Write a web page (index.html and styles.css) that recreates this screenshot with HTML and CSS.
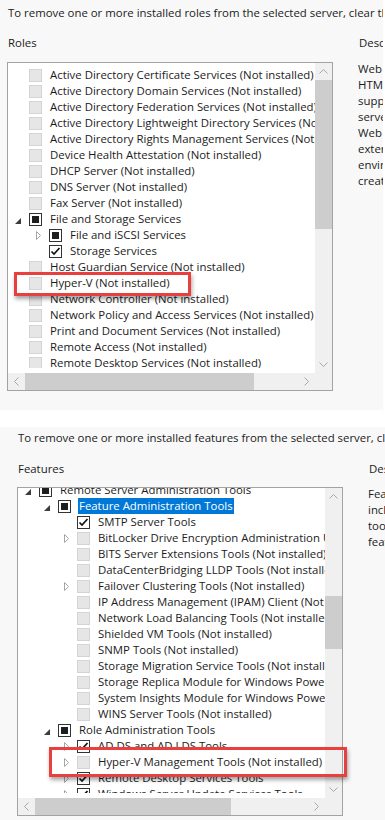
FILE: index.html
```html
<!DOCTYPE html>
<html>
<head>
<meta charset="utf-8">
<title>Remove Roles and Features</title>
<link rel="stylesheet" href="styles.css">
</head>
<body>
<section class="shot shot1">
  <p class="intro">To remove one or more installed roles from the selected server, clear the check boxes.</p>
  <div class="cols">
    <div class="left">
      <h2 class="label">Roles</h2>
      <div class="listbox">
        <div class="view">
          <ul class="tree t1">
            <li class="row l0"><span class="exp"></span><span class="cb dis"></span><span class="txt">Active Directory Certificate Services (Not installed)</span></li>
            <li class="row l0"><span class="exp"></span><span class="cb dis"></span><span class="txt">Active Directory Domain Services (Not installed)</span></li>
            <li class="row l0"><span class="exp"></span><span class="cb dis"></span><span class="txt">Active Directory Federation Services (Not installed)</span></li>
            <li class="row l0"><span class="exp"></span><span class="cb dis"></span><span class="txt">Active Directory Lightweight Directory Services (Not installed)</span></li>
            <li class="row l0"><span class="exp"></span><span class="cb dis"></span><span class="txt">Active Directory Rights Management Services (Not installed)</span></li>
            <li class="row l0"><span class="exp"></span><span class="cb dis"></span><span class="txt">Device Health Attestation (Not installed)</span></li>
            <li class="row l0"><span class="exp"></span><span class="cb dis"></span><span class="txt">DHCP Server (Not installed)</span></li>
            <li class="row l0"><span class="exp"></span><span class="cb dis"></span><span class="txt">DNS Server (Not installed)</span></li>
            <li class="row l0"><span class="exp"></span><span class="cb dis"></span><span class="txt">Fax Server (Not installed)</span></li>
            <li class="row l0"><span class="exp"><svg class="tri-open" width="6" height="6" viewBox="0 0 6 6"><polygon points="6,0 6,6 0,6"/></svg></span><span class="cb part"><i></i></span><span class="txt">File and Storage Services</span></li>
            <li class="row l1"><span class="exp"><svg class="tri-closed" width="5" height="9" viewBox="0 0 5 9"><polygon points="0.5,0.5 4.5,4.5 0.5,8.5"/></svg></span><span class="cb part"><i></i></span><span class="txt">File and iSCSI Services</span></li>
            <li class="row l1"><span class="exp"></span><span class="cb on"><svg width="11" height="11" viewBox="0 0 11 11"><polyline points="1.5,5.5 4,8 9.5,2"/></svg></span><span class="txt">Storage Services</span></li>
            <li class="row l0"><span class="exp"></span><span class="cb dis"></span><span class="txt">Host Guardian Service (Not installed)</span></li>
            <li class="row l0"><span class="exp"></span><span class="cb dis"></span><span class="txt">Hyper-V (Not installed)</span></li>
            <li class="row l0"><span class="exp"></span><span class="cb dis"></span><span class="txt">Network Controller (Not installed)</span></li>
            <li class="row l0"><span class="exp"></span><span class="cb dis"></span><span class="txt">Network Policy and Access Services (Not installed)</span></li>
            <li class="row l0"><span class="exp"></span><span class="cb dis"></span><span class="txt">Print and Document Services (Not installed)</span></li>
            <li class="row l0"><span class="exp"></span><span class="cb dis"></span><span class="txt">Remote Access (Not installed)</span></li>
            <li class="row l0"><span class="exp"></span><span class="cb dis"></span><span class="txt">Remote Desktop Services (Not installed)</span></li>
            <li class="row l0"><span class="exp"></span><span class="cb dis"></span><span class="txt">Volume Activation Services (Not installed)</span></li>
          </ul>
        </div>
        <div class="vbar">
          <span class="btn"><svg width="9" height="5" viewBox="0 0 9 5"><polyline points="0.5,4.5 4.5,0.5 8.5,4.5"/></svg></span>
          <span class="track"><span class="thumb th1"></span></span>
          <span class="btn"><svg width="9" height="5" viewBox="0 0 9 5"><polyline points="0.5,0.5 4.5,4.5 8.5,0.5"/></svg></span>
        </div>
        <div class="hbar">
          <span class="btn"><svg width="5" height="9" viewBox="0 0 5 9"><polyline points="4.5,0.5 0.5,4.5 4.5,8.5"/></svg></span>
          <span class="track"><span class="thumb tw1"></span></span>
          <span class="btn"><svg width="5" height="9" viewBox="0 0 5 9"><polyline points="0.5,0.5 4.5,4.5 0.5,8.5"/></svg></span>
        </div>
        <div class="corner"></div>
      </div>
    </div>
    <div class="desc">
      <h2 class="label">Description</h2>
      <div class="dtext">
        <div>Web Server (IIS)</div>
        <div>HTML</div>
        <div>support</div>
        <div>server</div>
        <div>Web</div>
        <div>extensions</div>
        <div>environment</div>
        <div>created</div>
      </div>
    </div>
  </div>
  <div class="mark mark1"></div>
</section>

<section class="shot shot2">
  <p class="intro">To remove one or more installed features from the selected server, clear the check boxes.</p>
  <div class="cols">
    <div class="left">
      <h2 class="label">Features</h2>
      <div class="listbox">
        <div class="view">
          <ul class="tree t2">
            <li class="row l0"><span class="exp"><svg class="tri-open" width="6" height="6" viewBox="0 0 6 6"><polygon points="6,0 6,6 0,6"/></svg></span><span class="cb part"><i></i></span><span class="txt">Remote Server Administration Tools</span></li>
            <li class="row l1"><span class="exp"><svg class="tri-open" width="6" height="6" viewBox="0 0 6 6"><polygon points="6,0 6,6 0,6"/></svg></span><span class="cb part"><i></i></span><span class="txt sel">Feature Administration Tools</span></li>
            <li class="row l2"><span class="exp"></span><span class="cb on"><svg width="11" height="11" viewBox="0 0 11 11"><polyline points="1.5,5.5 4,8 9.5,2"/></svg></span><span class="txt">SMTP Server Tools</span></li>
            <li class="row l2"><span class="exp"><svg class="tri-closed" width="5" height="9" viewBox="0 0 5 9"><polygon points="0.5,0.5 4.5,4.5 0.5,8.5"/></svg></span><span class="cb dis"></span><span class="txt">BitLocker Drive Encryption Administration Utilities (Not installed)</span></li>
            <li class="row l2"><span class="exp"></span><span class="cb dis"></span><span class="txt">BITS Server Extensions Tools (Not installed)</span></li>
            <li class="row l2"><span class="exp"></span><span class="cb dis"></span><span class="txt">DataCenterBridging LLDP Tools (Not installed)</span></li>
            <li class="row l2"><span class="exp"><svg class="tri-closed" width="5" height="9" viewBox="0 0 5 9"><polygon points="0.5,0.5 4.5,4.5 0.5,8.5"/></svg></span><span class="cb dis"></span><span class="txt">Failover Clustering Tools (Not installed)</span></li>
            <li class="row l2"><span class="exp"></span><span class="cb dis"></span><span class="txt">IP Address Management (IPAM) Client (Not installed)</span></li>
            <li class="row l2"><span class="exp"></span><span class="cb dis"></span><span class="txt">Network Load Balancing Tools (Not installed)</span></li>
            <li class="row l2"><span class="exp"></span><span class="cb dis"></span><span class="txt">Shielded VM Tools (Not installed)</span></li>
            <li class="row l2"><span class="exp"></span><span class="cb dis"></span><span class="txt">SNMP Tools (Not installed)</span></li>
            <li class="row l2"><span class="exp"></span><span class="cb dis"></span><span class="txt">Storage Migration Service Tools (Not installed)</span></li>
            <li class="row l2"><span class="exp"></span><span class="cb dis"></span><span class="txt">Storage Replica Module for Windows PowerShell (Not installed)</span></li>
            <li class="row l2"><span class="exp"></span><span class="cb dis"></span><span class="txt">System Insights Module for Windows PowerShell (Not installed)</span></li>
            <li class="row l2"><span class="exp"></span><span class="cb dis"></span><span class="txt">WINS Server Tools (Not installed)</span></li>
            <li class="row l1"><span class="exp"><svg class="tri-open" width="6" height="6" viewBox="0 0 6 6"><polygon points="6,0 6,6 0,6"/></svg></span><span class="cb part"><i></i></span><span class="txt">Role Administration Tools</span></li>
            <li class="row l2"><span class="exp"><svg class="tri-closed" width="5" height="9" viewBox="0 0 5 9"><polygon points="0.5,0.5 4.5,4.5 0.5,8.5"/></svg></span><span class="cb on"><svg width="11" height="11" viewBox="0 0 11 11"><polyline points="1.5,5.5 4,8 9.5,2"/></svg></span><span class="txt">AD DS and AD LDS Tools</span></li>
            <li class="row l2"><span class="exp"><svg class="tri-closed" width="5" height="9" viewBox="0 0 5 9"><polygon points="0.5,0.5 4.5,4.5 0.5,8.5"/></svg></span><span class="cb dis"></span><span class="txt">Hyper-V Management Tools (Not installed)</span></li>
            <li class="row l2"><span class="exp"><svg class="tri-closed" width="5" height="9" viewBox="0 0 5 9"><polygon points="0.5,0.5 4.5,4.5 0.5,8.5"/></svg></span><span class="cb on"><svg width="11" height="11" viewBox="0 0 11 11"><polyline points="1.5,5.5 4,8 9.5,2"/></svg></span><span class="txt">Remote Desktop Services Tools</span></li>
            <li class="row l2"><span class="exp"><svg class="tri-closed" width="5" height="9" viewBox="0 0 5 9"><polygon points="0.5,0.5 4.5,4.5 0.5,8.5"/></svg></span><span class="cb on"><svg width="11" height="11" viewBox="0 0 11 11"><polyline points="1.5,5.5 4,8 9.5,2"/></svg></span><span class="txt">Windows Server Update Services Tools</span></li>
          </ul>
        </div>
        <div class="vbar">
          <span class="btn"><svg width="9" height="5" viewBox="0 0 9 5"><polyline points="0.5,4.5 4.5,0.5 8.5,4.5"/></svg></span>
          <span class="track"><span class="thumb th2"></span></span>
          <span class="btn"><svg width="9" height="5" viewBox="0 0 9 5"><polyline points="0.5,0.5 4.5,4.5 8.5,0.5"/></svg></span>
        </div>
        <div class="hbar">
          <span class="btn"><svg width="5" height="9" viewBox="0 0 5 9"><polyline points="4.5,0.5 0.5,4.5 4.5,8.5"/></svg></span>
          <span class="track"><span class="thumb tw2"></span></span>
          <span class="btn"><svg width="5" height="9" viewBox="0 0 5 9"><polyline points="0.5,0.5 4.5,4.5 0.5,8.5"/></svg></span>
        </div>
        <div class="corner"></div>
      </div>
    </div>
    <div class="desc">
      <h2 class="label">Description</h2>
      <div class="dtext">
        <div>Features</div>
        <div>include</div>
        <div>tools</div>
        <div>features</div>
      </div>
    </div>
  </div>
  <div class="mark mark2"></div>
</section>
</body>
</html>
```

FILE: styles.css
```css
* { box-sizing: border-box; margin: 0; padding: 0; }
html, body { background: #ffffff; }
body {
  width: 385px;
  height: 820px;
  overflow: hidden;
  font-family: "Open Sans", "Noto Sans", sans-serif;
  font-size: 11.4px;
  line-height: 16px;
  color: #1b1b1b;
}
.shot { position: relative; background: #f8f8f8; overflow: hidden; }
.shot1 { width: 383px; height: 410px; padding: 5px 0 0 7px; }
.shot2 { width: 385px; height: 393px; margin-top: 17px; padding: 3px 0 0 17px; }

.intro { white-space: nowrap; padding-left: 1px; }
.label { font-size: 11.4px; font-weight: 400; line-height: 16px; padding-left: 1px; white-space: nowrap; }

.cols { display: flex; gap: 25px; margin-top: 14px; }
.shot2 .cols { margin-top: 15px; }
.left { flex: none; width: 326px; display: flex; flex-direction: column; gap: 11px; }
.shot2 .left { gap: 10px; }

.listbox {
  width: 326px;
  height: 329px;
  border: 1px solid #a3a3a3;
  background: #ffffff;
  display: grid;
  grid-template-columns: 307px 17px;
  grid-template-rows: 310px 17px;
}
.view { overflow: hidden; clip-path: inset(0 0 5px 0); }
.tree { list-style: none; }
.t1 { padding-top: 4px; }
.t2 { margin-top: -6px; }

.row { display: flex; align-items: center; height: 16px; white-space: nowrap; }
.t1 .l0 { padding-left: 1px; }
.t1 .l1 { padding-left: 21px; }
.t2 .l0 { padding-left: 1px; }
.t2 .l1 { padding-left: 20px; }
.t2 .l2 { padding-left: 39px; }

.exp { flex: none; width: 20px; height: 16px; display: flex; align-items: center; padding-left: 7px; }
.tri-open { fill: #3c3c3c; margin-top: 3px; margin-left: -1px; }
.tri-closed { fill: none; stroke: #a6a6a6; stroke-width: 1; }

.cb { flex: none; width: 13px; height: 13px; margin-right: 8px; border: 1px solid #333333; background: #ffffff; display: flex; align-items: center; justify-content: center; }
.cb.dis { background: #e6e6e6; border-color: #d4d4d4; }
.cb.part i { display: block; width: 7px; height: 7px; background: #1e1e1e; }
.cb.on svg { fill: none; stroke: #111111; stroke-width: 1.7; }

.txt { line-height: 16px; }
.txt.sel { background: #0078d7; color: #ffffff; padding: 0 1px; margin-left: -1px; }

.vbar { background: #f0f0f0; display: flex; flex-direction: column; }
.hbar { background: #f0f0f0; display: flex; flex-direction: row; }
.corner { background: #f0f0f0; }
.btn { flex: none; width: 17px; height: 17px; display: flex; align-items: center; justify-content: center; }
.btn svg { fill: none; stroke: #a8a8a8; stroke-width: 1; }
.track { flex: 1; display: flex; }
.vbar .track { flex-direction: column; }
.thumb { display: block; background: #cdcdcd; flex: none; }
.th1 { width: 17px; height: 149px; margin-top: 0; }
.th2 { width: 17px; height: 53px; margin-top: 91px; }
.tw1 { height: 17px; width: 229px; }
.tw2 { height: 17px; width: 196px; }

.desc { flex: none; width: 200px; white-space: nowrap; }
.dtext { margin-top: 10px; }
.shot2 .dtext { margin-top: 9px; }

.mark { position: absolute; border: 3px solid #e8403f; box-shadow: 1px 3px 4px rgba(0, 0, 0, 0.35); }
.mark1 { left: 14px; top: 272px; width: 177px; height: 24px; }
.mark2 { left: 49px; top: 320px; width: 298px; height: 30px; }
```
